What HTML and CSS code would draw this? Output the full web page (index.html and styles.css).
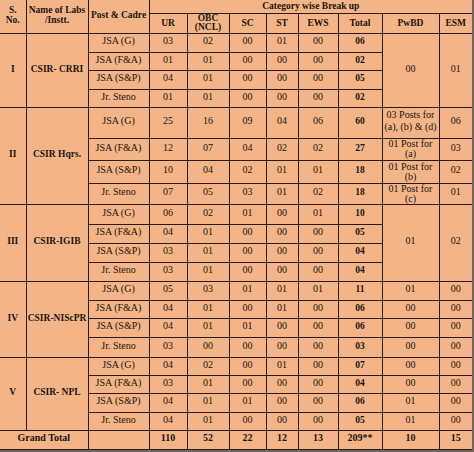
FILE: index.html
```html
<!DOCTYPE html>
<html>
<head>
<meta charset="utf-8">
<link rel="stylesheet" href="styles.css">
</head>
<body>
<table class="grid">
  <colgroup>
    <col class="c-sno"><col class="c-lab"><col class="c-post"><col class="c-ur"><col class="c-obc"><col class="c-sc"><col class="c-st"><col class="c-ews"><col class="c-tot"><col class="c-pwbd"><col class="c-esm">
  </colgroup>
  <thead>
    <tr class="h1">
      <th rowspan="2" class="left sno-h">S.<br>No.</th>
      <th rowspan="2" class="left lab-h">Name of Labs /Instt.</th>
      <th rowspan="2">Post &amp; Cadre</th>
      <th colspan="8" class="cat">Category wise Break up</th>
    </tr>
    <tr class="h2">
      <th>UR</th><th class="obc">OBC<br>(NCL)</th><th>SC</th><th>ST</th><th>EWS</th><th>Total</th><th>PwBD</th><th>ESM</th>
    </tr>
  </thead>
  <tbody>
    <tr class="r19">
      <td rowspan="4" class="b">I</td><td rowspan="4" class="b">CSIR- CRRI</td>
      <td>JSA (G)</td><td>03</td><td>02</td><td>00</td><td>01</td><td>00</td><td class="b">06</td>
      <td rowspan="4">00</td><td rowspan="4">01</td>
    </tr>
    <tr class="r18"><td>JSA (F&amp;A)</td><td>01</td><td>01</td><td>00</td><td>00</td><td>00</td><td class="b">02</td></tr>
    <tr class="r19"><td>JSA (S&amp;P)</td><td>04</td><td>01</td><td>00</td><td>00</td><td>00</td><td class="b">05</td></tr>
    <tr class="r18"><td>Jr. Steno</td><td>01</td><td>01</td><td>00</td><td>00</td><td>00</td><td class="b">02</td></tr>

    <tr class="r31">
      <td rowspan="4" class="b">II</td><td rowspan="4" class="b">CSIR Hqrs.</td>
      <td>JSA (G)</td><td>25</td><td>16</td><td>09</td><td>04</td><td>06</td><td class="b">60</td>
      <td class="just">03 Posts for (a), (b) &amp; (d)</td><td>06</td>
    </tr>
    <tr class="r22"><td>JSA (F&amp;A)</td><td>12</td><td>07</td><td>04</td><td>02</td><td>02</td><td class="b">27</td><td class="pw">01 Post for<br>(a)</td><td>03</td></tr>
    <tr class="r23"><td>JSA (S&amp;P)</td><td>10</td><td>04</td><td>02</td><td>01</td><td>01</td><td class="b">18</td><td class="pw">01 Post for<br>(b)</td><td>02</td></tr>
    <tr class="r21"><td>Jr. Steno</td><td>07</td><td>05</td><td>03</td><td>01</td><td>02</td><td class="b">18</td><td class="pw">01 Post for<br>(c)</td><td>01</td></tr>

    <tr class="r20">
      <td rowspan="4" class="b">III</td><td rowspan="4" class="b">CSIR-IGIB</td>
      <td>JSA (G)</td><td>06</td><td>02</td><td>01</td><td>00</td><td>01</td><td class="b">10</td>
      <td rowspan="4">01</td><td rowspan="4">02</td>
    </tr>
    <tr class="r19"><td>JSA (F&amp;A)</td><td>04</td><td>01</td><td>00</td><td>00</td><td>00</td><td class="b">05</td></tr>
    <tr class="r19"><td>JSA (S&amp;P)</td><td>03</td><td>01</td><td>00</td><td>00</td><td>00</td><td class="b">04</td></tr>
    <tr class="r19"><td>Jr. Steno</td><td>03</td><td>01</td><td>00</td><td>00</td><td>00</td><td class="b">04</td></tr>

    <tr class="r19">
      <td rowspan="4" class="b">IV</td><td rowspan="4" class="b">CSIR-NIScPR</td>
      <td>JSA (G)</td><td>05</td><td>03</td><td>01</td><td>01</td><td>01</td><td class="b">11</td><td>01</td><td>00</td>
    </tr>
    <tr class="r18"><td>JSA (F&amp;A)</td><td>04</td><td>01</td><td>00</td><td>01</td><td>00</td><td class="b">06</td><td>00</td><td>00</td></tr>
    <tr class="r19"><td>JSA (S&amp;P)</td><td>04</td><td>01</td><td>01</td><td>00</td><td>00</td><td class="b">06</td><td>00</td><td>00</td></tr>
    <tr class="r20"><td>Jr. Steno</td><td>03</td><td>00</td><td>00</td><td>00</td><td>00</td><td class="b">03</td><td>00</td><td>00</td></tr>

    <tr class="r18">
      <td rowspan="4" class="b">V</td><td rowspan="4" class="b">CSIR- NPL</td>
      <td>JSA (G)</td><td>04</td><td>02</td><td>00</td><td>01</td><td>00</td><td class="b">07</td><td>00</td><td>00</td>
    </tr>
    <tr class="r18"><td>JSA (F&amp;A)</td><td>03</td><td>01</td><td>00</td><td>00</td><td>00</td><td class="b">04</td><td>00</td><td>00</td></tr>
    <tr class="r19"><td>JSA (S&amp;P)</td><td>04</td><td>01</td><td>01</td><td>00</td><td>00</td><td class="b">06</td><td>01</td><td>00</td></tr>
    <tr class="r18"><td>Jr. Steno</td><td>04</td><td>01</td><td>00</td><td>00</td><td>00</td><td class="b">05</td><td>01</td><td>00</td></tr>

    <tr class="r19 total">
      <td colspan="2">Grand Total</td><td></td><td>110</td><td>52</td><td>22</td><td>12</td><td>13</td><td>209**</td><td>10</td><td>15</td>
    </tr>
  </tbody>
</table>
</body>
</html>
```
FILE: styles.css
```css
html, body {
  margin: 0;
  padding: 0;
}
body {
  width: 474px;
  height: 452px;
  background: #6e6560;
  overflow: hidden;
  font-family: "Liberation Serif", "Times New Roman", serif;
  color: #1c140f;
}
.grid {
  border-collapse: collapse;
  table-layout: fixed;
  width: 472px;
  background: #f3b487;
  font-size: 10px;
  line-height: 10px;
}
.c-sno { width: 26px; }
.c-lab { width: 62px; }
.c-post { width: 61px; }
.c-ur { width: 38px; }
.c-obc { width: 42px; }
.c-sc { width: 37px; }
.c-st { width: 32px; }
.c-ews { width: 40px; }
.c-tot { width: 44px; }
.c-pwbd { width: 57px; }
.c-esm { width: 33px; }

.grid th, .grid td {
  border: 1px solid #2a1c12;
  padding: 0 1px 3px 1px;
  text-align: center;
  vertical-align: middle;
  overflow: hidden;
}
.grid th {
  font-weight: bold;
  font-size: 9.5px;
}
.grid tr > :first-child { border-left: none; }
.grid thead tr:first-child > * { border-top: none; }
.grid tr > :last-child { border-right: none; }

.h1 { height: 13px; }
.h2 { height: 20px; }
.h1 .cat { padding: 0; line-height: 12px; }
.h2 th { padding-bottom: 0; }
.h2 .obc { line-height: 9px; }
.sno-h { padding-left: 5px; text-align: left; }
.lab-h { padding-left: 5px; padding-right: 4px; text-align: justify; }
.left { text-align: left; }

.b { font-weight: bold; }
.grid td.b { font-size: 9.5px; }
.just {
  text-align: justify;
  padding-left: 4px;
  padding-right: 1px;
  line-height: 12px;
}
.grid td.pw { line-height: 10px; padding: 0 1px; }

.r18 { height: 18px; }
.r19 { height: 19px; }
.r20 { height: 20px; }
.r21 { height: 21px; }
.r22 { height: 22px; }
.r23 { height: 23px; }
.r31 { height: 31px; }

.total td { font-weight: bold; }
```
